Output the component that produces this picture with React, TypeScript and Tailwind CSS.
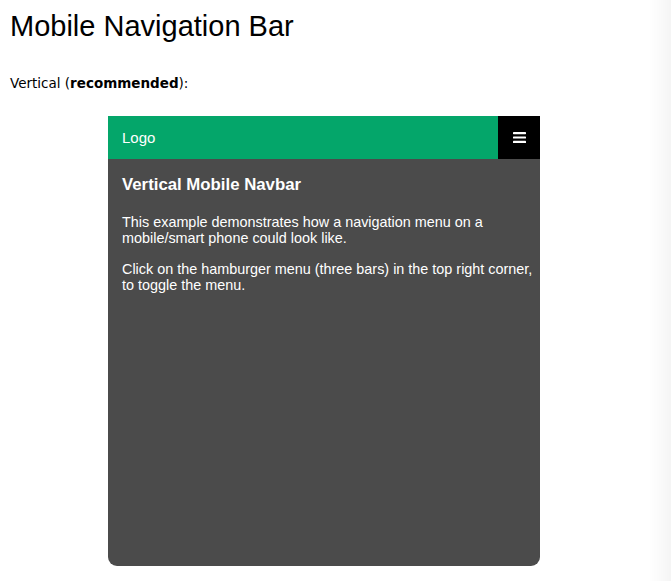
export default function App() {
  return (
    <div className="min-h-screen bg-white text-black">
      {/* page heading */}
      <h1 className="ml-[10px] pt-[9px] text-[29px] leading-[34px] font-normal font-['Liberation_Sans',Arial,sans-serif]">
        Mobile Navigation Bar
      </h1>
      <p className="ml-[10px] mt-[31px] text-[13.5px] leading-[18px] font-['DejaVu_Sans',Verdana,sans-serif]">
        Vertical (<b>recommended</b>):
      </p>

      {/* phone mock */}
      <div className="ml-[108px] mt-[24px] w-[432px] h-[450px] bg-[#4b4b4b] rounded-b-[9px] overflow-hidden text-white font-['Liberation_Sans',Arial,sans-serif]">
        <div className="flex h-[43px] bg-[#04a66a]">
          <span className="flex-1 pl-[14px] pt-[12px] text-[15px] leading-[20px]">Logo</span>
          <button className="w-[42px] h-[43px] bg-black flex items-center justify-center">
            <svg width="13" height="11" viewBox="0 0 13 11" fill="white">
              <rect x="0" y="0" width="13" height="2.2" rx="0.6" />
              <rect x="0" y="4.4" width="13" height="2.2" rx="0.6" />
              <rect x="0" y="8.8" width="13" height="2.2" rx="0.6" />
            </svg>
          </button>
        </div>
        <div className="pl-[14px]">
          <h3 className="mt-[16px] text-[16.8px] leading-[20px] font-bold">Vertical Mobile Navbar</h3>
          <p className="mt-[19px] text-[14.4px] leading-[16px]">
            This example demonstrates how a navigation menu on a mobile/smart phone could look like.
          </p>
          <p className="mt-[15px] text-[14.4px] leading-[16px]">
            Click on the hamburger menu (three bars) in the top right corner, to toggle the menu.
          </p>
        </div>
      </div>

      {/* faint edge shade on the right */}
      <div className="pointer-events-none fixed top-0 right-0 h-full w-[22px] bg-gradient-to-r from-transparent to-black/[0.04]" />
    </div>
  );
}
